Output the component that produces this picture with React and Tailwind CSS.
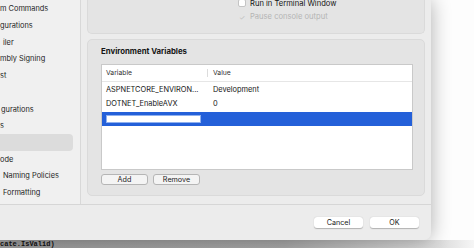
import React from "react";

const font = { fontFamily: "Inter, 'Liberation Sans', sans-serif" };

const sideItems = [
  { t: "m Commands", x: 0 },
  { t: "gurations", x: 0 },
  { t: "iler", x: 3 },
  { t: "mbly Signing", x: 0 },
  { t: "st", x: 0 },
  { t: "", x: 0 },
  { t: "gurations", x: 1 },
  { t: "s", x: 0 },
  { t: "", x: 0, sel: true },
  { t: "ode", x: 0 },
  { t: "Naming Policies", x: 3 },
  { t: "Formatting", x: 3 },
];

function Sidebar() {
  return (
    <div className="w-[81px] shrink-0 bg-[#f0f0f0] border-r border-[#d8d8d8] pt-[0.6px]">
      {sideItems.map((it, i) => (
        <div key={i} className="h-[16.7px] flex items-center pr-[7px]">
          <div
            className={
              "h-full w-full flex items-center rounded-r-[4px] text-[7.4px] text-[#1e1e1e] whitespace-nowrap " +
              (it.sel ? "bg-[#dcdcdc]" : "")
            }
          >
            <span className={it.x === 3 ? "pl-[3px]" : it.x === 1 ? "pl-[1px]" : ""}>{it.t}</span>
          </div>
        </div>
      ))}
    </div>
  );
}

function TopBox() {
  return (
    <div className="mx-[6px] h-[34px] bg-[#e4e4e4] border-x border-b border-[#dadada] rounded-b-[5px] pl-[150px] flex flex-col">
      <div className="h-[9px] flex items-center mt-[-0.5px]">
        <div className="w-[8px] h-[8px] bg-white border border-[#c4c4c4] rounded-[2px] mt-[-2px]" />
        <span className="ml-[4px] text-[7.6px] text-[#141414] whitespace-nowrap">Run in Terminal Window</span>
      </div>
      <div className="h-[9px] mt-[4px] flex items-center">
        <span className="w-[8px] text-center text-[7px] text-[#bdbdbd] leading-none">✓</span>
        <span className="ml-[4px] text-[7.6px] text-[#b4b4b4] whitespace-nowrap">Pause console output</span>
      </div>
    </div>
  );
}

function Row({ a, b, h = "h-[14.5px]" }) {
  return (
    <div className={"flex items-center text-[7.4px] text-[#161616] " + h}>
      <div className="w-[106px] pl-[4px] whitespace-nowrap overflow-hidden">{a}</div>
      <div className="pl-[5px] whitespace-nowrap">{b}</div>
    </div>
  );
}

function EnvBox() {
  return (
    <div className="mx-[6px] mt-[5px] h-[157px] bg-[#e4e4e4] border border-[#dadada] rounded-[5px] pl-[13px] pr-[11px] pt-[7px]">
      <div className="h-[10px] flex items-center text-[7.8px] font-bold text-[#141414] whitespace-nowrap">
        Environment Variables
      </div>
      <div className="mt-[7px] h-[106px] bg-white border border-[#c9c9c9] flex flex-col">
        <div className="h-[17px] flex items-center border-b border-[#e6e6e6] text-[6.8px] text-[#333]">
          <div className="w-[106px] pl-[4px] border-r border-[#dcdcdc] h-[8px] flex items-center">Variable</div>
          <div className="pl-[5px]">Value</div>
        </div>
        <Row a="ASPNETCORE_ENVIRON..." b="Development" />
        <Row a="DOTNET_EnableAVX" b="0" />
        <div className="h-[14px] mt-[0.5px] bg-[#2460d9] flex items-center pl-[4px]">
          <div className="w-[95px] h-[8px] bg-white border border-[#8fb0ef]" />
        </div>
      </div>
      <div className="mt-[4px] flex gap-[5px]">
        <button className="w-[47px] h-[11px] rounded-[3px] border border-[#b5b5b5] bg-[#f4f4f4] text-[7.2px] text-[#222] flex items-center justify-center leading-none">
          Add
        </button>
        <button className="w-[47px] h-[11px] rounded-[3px] border border-[#b5b5b5] bg-[#f4f4f4] text-[7.2px] text-[#222] flex items-center justify-center leading-none">
          Remove
        </button>
      </div>
    </div>
  );
}

export default function App() {
  return (
    <div style={font} className="w-[474px] h-[248px] overflow-hidden bg-[#fdfdfd] flex flex-col">
      <div className="h-[240px] flex shrink-0">
        <div className="w-[431px] h-[240px] bg-[#ececec] rounded-br-[7px] flex flex-col relative z-10 shadow-[0_0_20px_rgba(0,0,0,0.32)]">
          <div className="h-[205px] flex border-b border-[#d6d6d6]">
            <Sidebar />
            <div className="flex-1 flex flex-col">
              <TopBox />
              <EnvBox />
            </div>
          </div>
          <div className="flex-1 flex justify-end gap-[7px] pr-[12px] pt-[12px]">
            <button className="w-[49px] h-[11px] rounded-[3px] bg-white shadow-[0_0.5px_1px_rgba(0,0,0,0.25)] text-[7.2px] text-[#222] flex items-center justify-center leading-none">
              Cancel
            </button>
            <button className="w-[49px] h-[11px] rounded-[3px] bg-white shadow-[0_0.5px_1px_rgba(0,0,0,0.25)] text-[7.2px] text-[#222] flex items-center justify-center leading-none">
              OK
            </button>
          </div>
        </div>
      </div>
      <div className="h-[8px] w-[474px] bg-[linear-gradient(to_right,#9a9a9a,#a6a6a6_60%,#dcdcdc_93%,#f6f6f6)] flex items-center">
        <span className="text-[7px] font-bold text-[#111] whitespace-nowrap leading-none mt-[1px]" style={{ fontFamily: "'Liberation Mono', monospace" }}>
          cate.IsValid)
        </span>
      </div>
    </div>
  );
}
